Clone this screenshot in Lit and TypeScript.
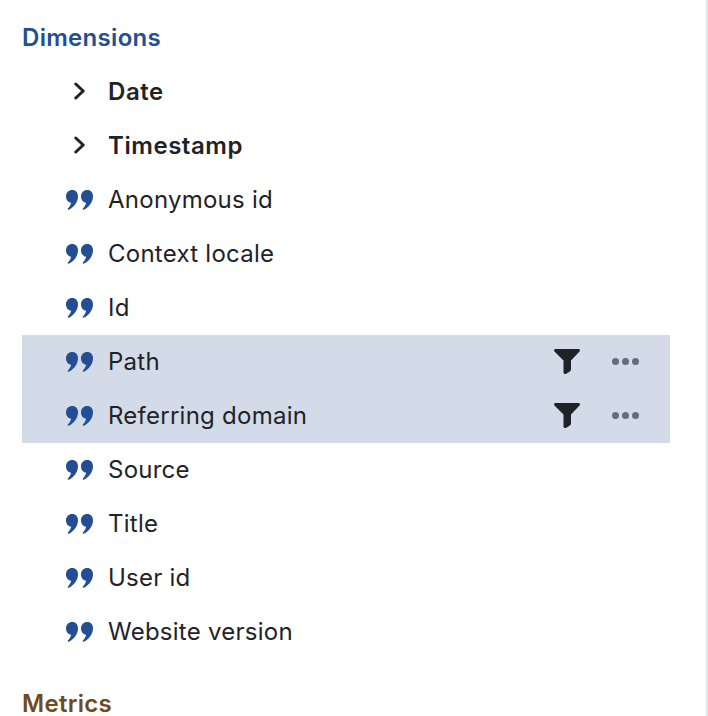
import { LitElement, html, css, svg } from "lit";
import { customElement } from "lit/decorators.js";

const mark = (x: number) =>
  svg`<path transform="translate(${x} 0)" d="M6.300 0C9.800 0 12 2.700 12 6.200c0 5.600-3.700 10.900-9.200 13.500-.9.400-1.500-.5-.9-1.200 1.500-1.600 2.900-3.600 3.200-5.800C2.100 12.300 0 9.600 0 6.400 0 2.700 2.700 0 6.300 0Z"/>`;
const quote = html`<svg class="quote" viewBox="0 0 27 20" width="27" height="20">${mark(0)}${mark(15)}</svg>`;
const chevron = html`<svg class="chev" viewBox="0 0 14 18" width="14" height="18"><path d="M2.800 2 L10.200 9 L2.800 16" fill="none" stroke="#1f2328" stroke-width="3" stroke-linecap="round" stroke-linejoin="round"/></svg>`;
const funnel = svg`<path d="M1.500 0H24.500C25.800 0 26.400 1.500 25.500 2.400L17 11.500V20.500C17 21.300 16.600 21.900 15.900 22.400L12.300 24.800C11 25.600 9.500 24.800 9.500 23.300V11.500L.5 2.400C-.4 1.500.2 0 1.500 0Z"/>`;

const rows: [string, boolean, boolean][] = [
  ["Date", true, false],
  ["Timestamp", true, false],
  ["Anonymous id", false, false],
  ["Context locale", false, false],
  ["Id", false, false],
  ["Path", false, true],
  ["Referring domain", false, true],
  ["Source", false, false],
  ["Title", false, false],
  ["User id", false, false],
  ["Website version", false, false],
];

@customElement("app-root")
export class AppRoot extends LitElement {
  static styles = css`
    :host {
      display: block;
      width: 708px;
      height: 716px;
      overflow: hidden;
      box-sizing: border-box;
      background: #fff;
      border-right: 2px solid #e1e4e8;
      font-family: Inter, "Liberation Sans", sans-serif;
      font-size: 24px;
      color: #1f2328;
    }
    .panel {
      width: 648px;
      margin-left: 22px;
      padding-top: 11px;
    }
    .head {
      height: 54px;
      display: flex;
      align-items: center;
      font-weight: 600;
      letter-spacing: 0.3px;
      line-height: 52px;
    }
    .dim { color: #234e93; }
    .met { color: #704a1d; margin-top: 18px; }
    .row {
      height: 54px;
      display: flex;
      align-items: center;
    }
    .row.on { background: #d3dbe8; }
    .icon {
      width: 87px;
      flex: none;
      display: flex;
      justify-content: flex-end;
      padding-right: 16px;
      box-sizing: border-box;
    }
    .quote { fill: #234e93; display: block; margin-bottom: 1px; }
    .chev { display: block; margin-right: 6px; margin-bottom: 2px; }
    .label {
      flex: 1;
      margin-left: -1px;
      padding-bottom: 2px;
      letter-spacing: 0.25px;
    }
    .b { font-weight: 600; letter-spacing: 0.55px; }
    .funnel { fill: #1f2328; display: block; margin-right: 32px; margin-bottom: 2px; }
    .dots {
      display: flex;
      gap: 3px;
      margin-right: 31px;
      margin-bottom: 2px;
    }
    .dots i {
      width: 7px;
      height: 7px;
      border-radius: 50%;
      background: #636e7b;
    }
  `;
  render() {
    return html`<div class="panel">
      <div class="head dim">Dimensions</div>
      ${rows.map(
        ([t, c, on]) => html`<div class="row ${on ? "on" : ""}">
          <div class="icon">${c ? chevron : quote}</div>
          <div class="label ${c ? "b" : ""}">${t}</div>
          ${on
            ? html`<svg class="funnel" viewBox="0 0 26 25" width="26" height="25">${funnel}</svg>
                <div class="dots"><i></i><i></i><i></i></div>`
            : ""}
        </div>`
      )}
      <div class="head met">Metrics</div>
    </div>`;
  }
}
